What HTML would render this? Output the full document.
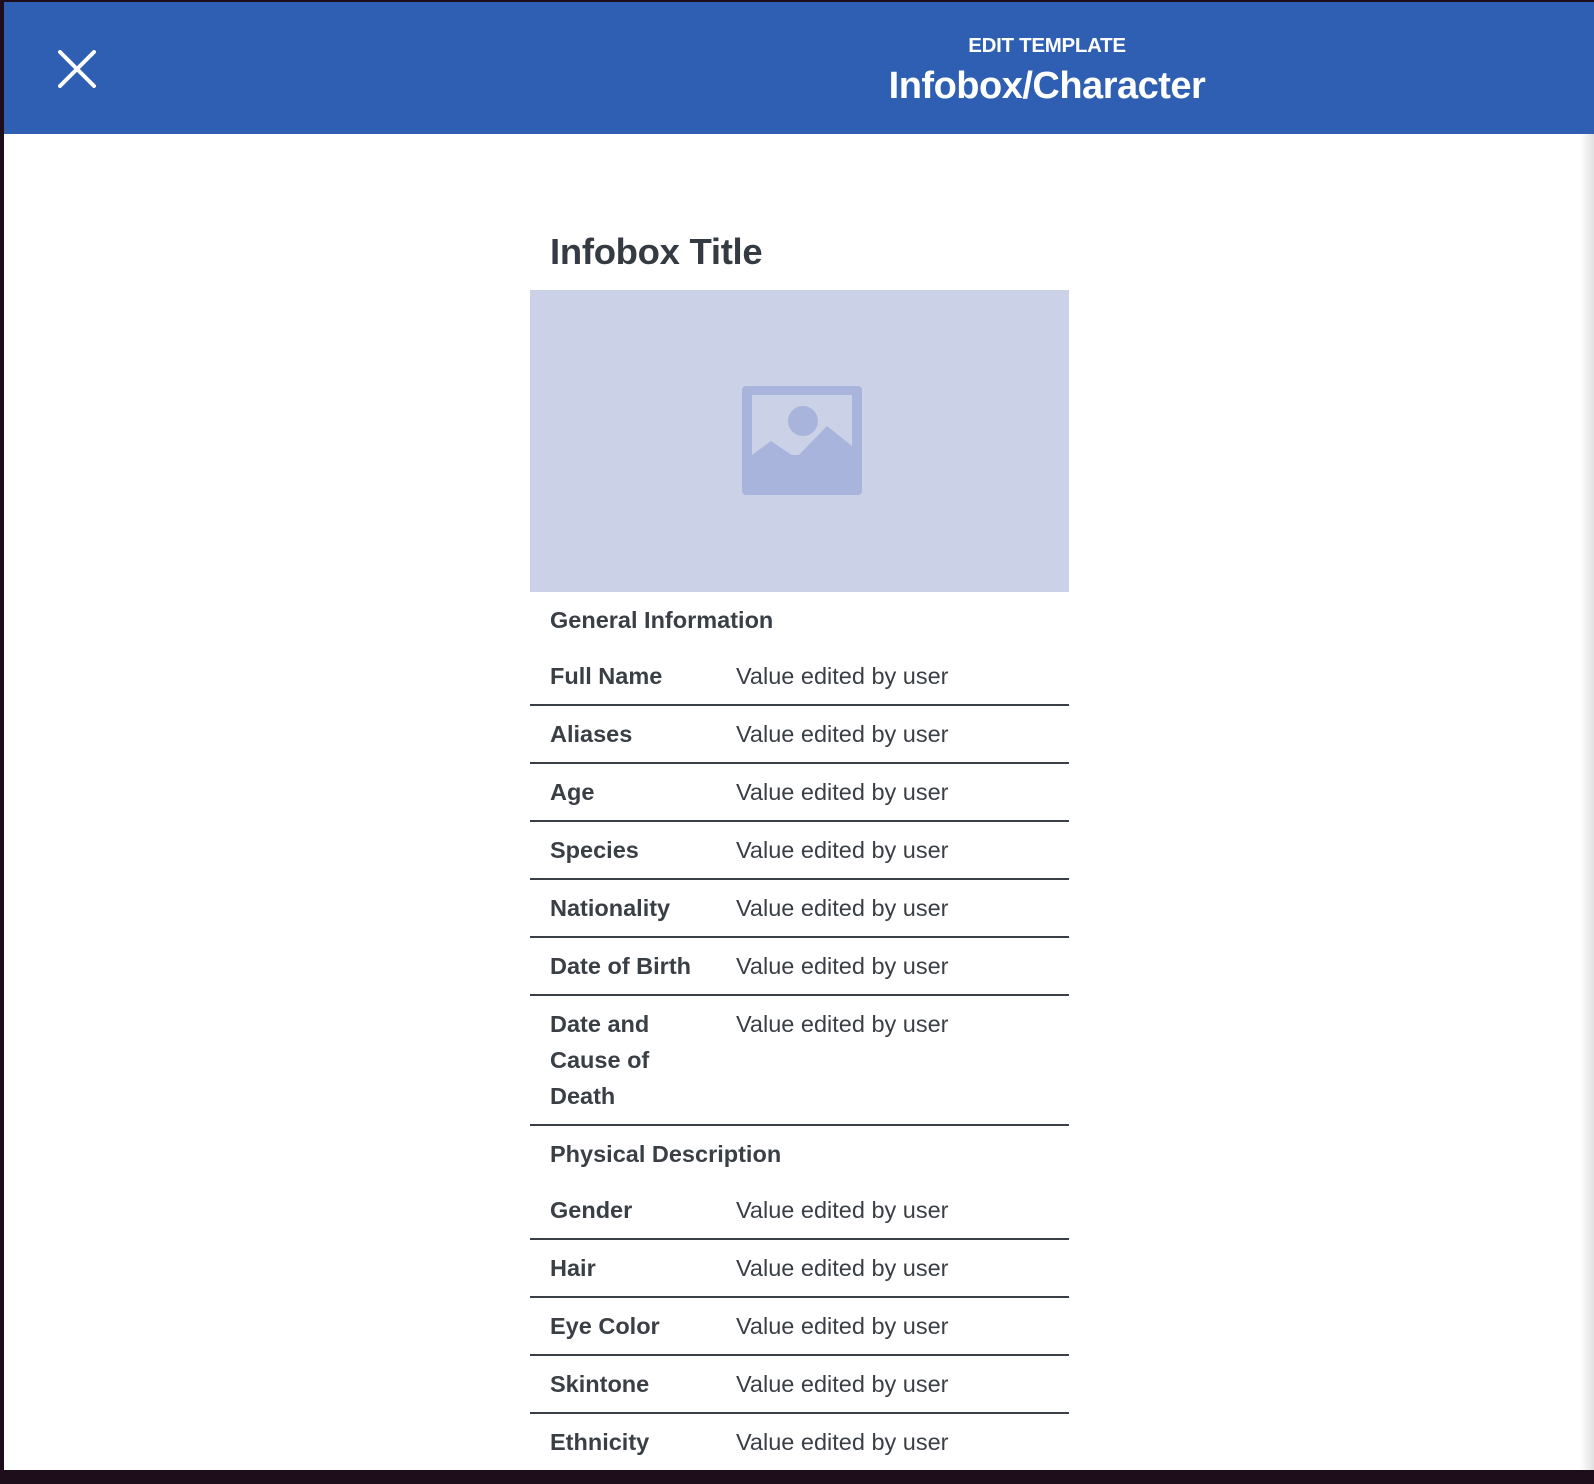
<!DOCTYPE html>
<html><head><meta charset="utf-8"><style>
*{margin:0;padding:0;box-sizing:border-box}
body{width:1594px;height:1484px;background:#1e0e1c;position:relative;overflow:hidden;font-family:"Liberation Sans",Arial,sans-serif;color:#3a3f46}
#page{position:absolute;left:4px;top:2px;width:1590px;height:1468px;background:#fff;overflow:hidden}
#page:after{content:"";position:absolute;right:0;top:132px;width:14px;bottom:0;background:linear-gradient(to right,rgba(0,0,0,0),rgba(0,0,0,0.12))}
#hdr{position:absolute;left:0;top:0;width:1590px;height:132px;background:#2e5fb2}
#x{position:absolute;left:54px;top:48px}
.sub{position:absolute;left:843px;width:400px;text-align:center;top:32px;color:#fff;font-weight:bold;font-size:20.5px;letter-spacing:-0.3px}
.ttl{position:absolute;left:793px;width:500px;text-align:center;top:63px;color:#fff;font-weight:bold;font-size:38px;letter-spacing:-0.5px}
#ib{position:absolute;left:526px;top:0;width:539px}
.it{position:absolute;left:20px;top:229px;font-size:36.5px;font-weight:bold;color:#353b43;letter-spacing:-0.3px}
.img{position:absolute;left:0;top:288px;width:539px;height:302px;background:#cbd1e6}
.img svg{position:absolute;left:212px;top:96px}
#rows{position:absolute;left:0;top:590px;width:539px}
.sec{height:56px;line-height:56px;padding-left:20px;font-size:23.5px;font-weight:bold}
.row{display:flex;height:58px;border-bottom:2px solid #3a3f46;font-size:23.5px;align-items:center}
.row .l{width:206px;padding-left:20px;font-weight:bold}
.row .v{flex:1}
.row.tall{height:130px;align-items:flex-start;padding-top:10px;line-height:36px}
.row.tall .l{padding-right:40px}
</style></head><body>
<div id="page">
<div id="hdr">
<svg id="x" width="38" height="38" viewBox="0 0 38 38"><path d="M2 2L36 36M36 2L2 36" stroke="#fff" stroke-width="4" stroke-linecap="round"/></svg>
<div class="sub">EDIT TEMPLATE</div>
<div class="ttl">Infobox/Character</div>
</div>
<div id="ib">
<div class="it">Infobox Title</div>
<div class="img"><svg width="120" height="110" viewBox="742 386 120 110"><rect x="742" y="386" width="120" height="109" rx="4" fill="#a9b4dc"/><rect x="752" y="395" width="100" height="60" fill="#cbd1e6"/><path d="M752 455L771 441L796 458L827 426L852 446L852 460L752 460Z" fill="#a9b4dc"/><circle cx="803" cy="421" r="15" fill="#a9b4dc"/></svg></div>
<div id="rows">
<div class="sec">General Information</div>
<div class="row"><div class="l">Full Name</div><div class="v">Value edited by user</div></div>
<div class="row"><div class="l">Aliases</div><div class="v">Value edited by user</div></div>
<div class="row"><div class="l">Age</div><div class="v">Value edited by user</div></div>
<div class="row"><div class="l">Species</div><div class="v">Value edited by user</div></div>
<div class="row"><div class="l">Nationality</div><div class="v">Value edited by user</div></div>
<div class="row"><div class="l">Date of Birth</div><div class="v">Value edited by user</div></div>
<div class="row tall"><div class="l">Date and Cause of Death</div><div class="v">Value edited by user</div></div>
<div class="sec">Physical Description</div>
<div class="row"><div class="l">Gender</div><div class="v">Value edited by user</div></div>
<div class="row"><div class="l">Hair</div><div class="v">Value edited by user</div></div>
<div class="row"><div class="l">Eye Color</div><div class="v">Value edited by user</div></div>
<div class="row"><div class="l">Skintone</div><div class="v">Value edited by user</div></div>
<div class="row"><div class="l">Ethnicity</div><div class="v">Value edited by user</div></div>
</div>
</div>
</div>
</body></html>
